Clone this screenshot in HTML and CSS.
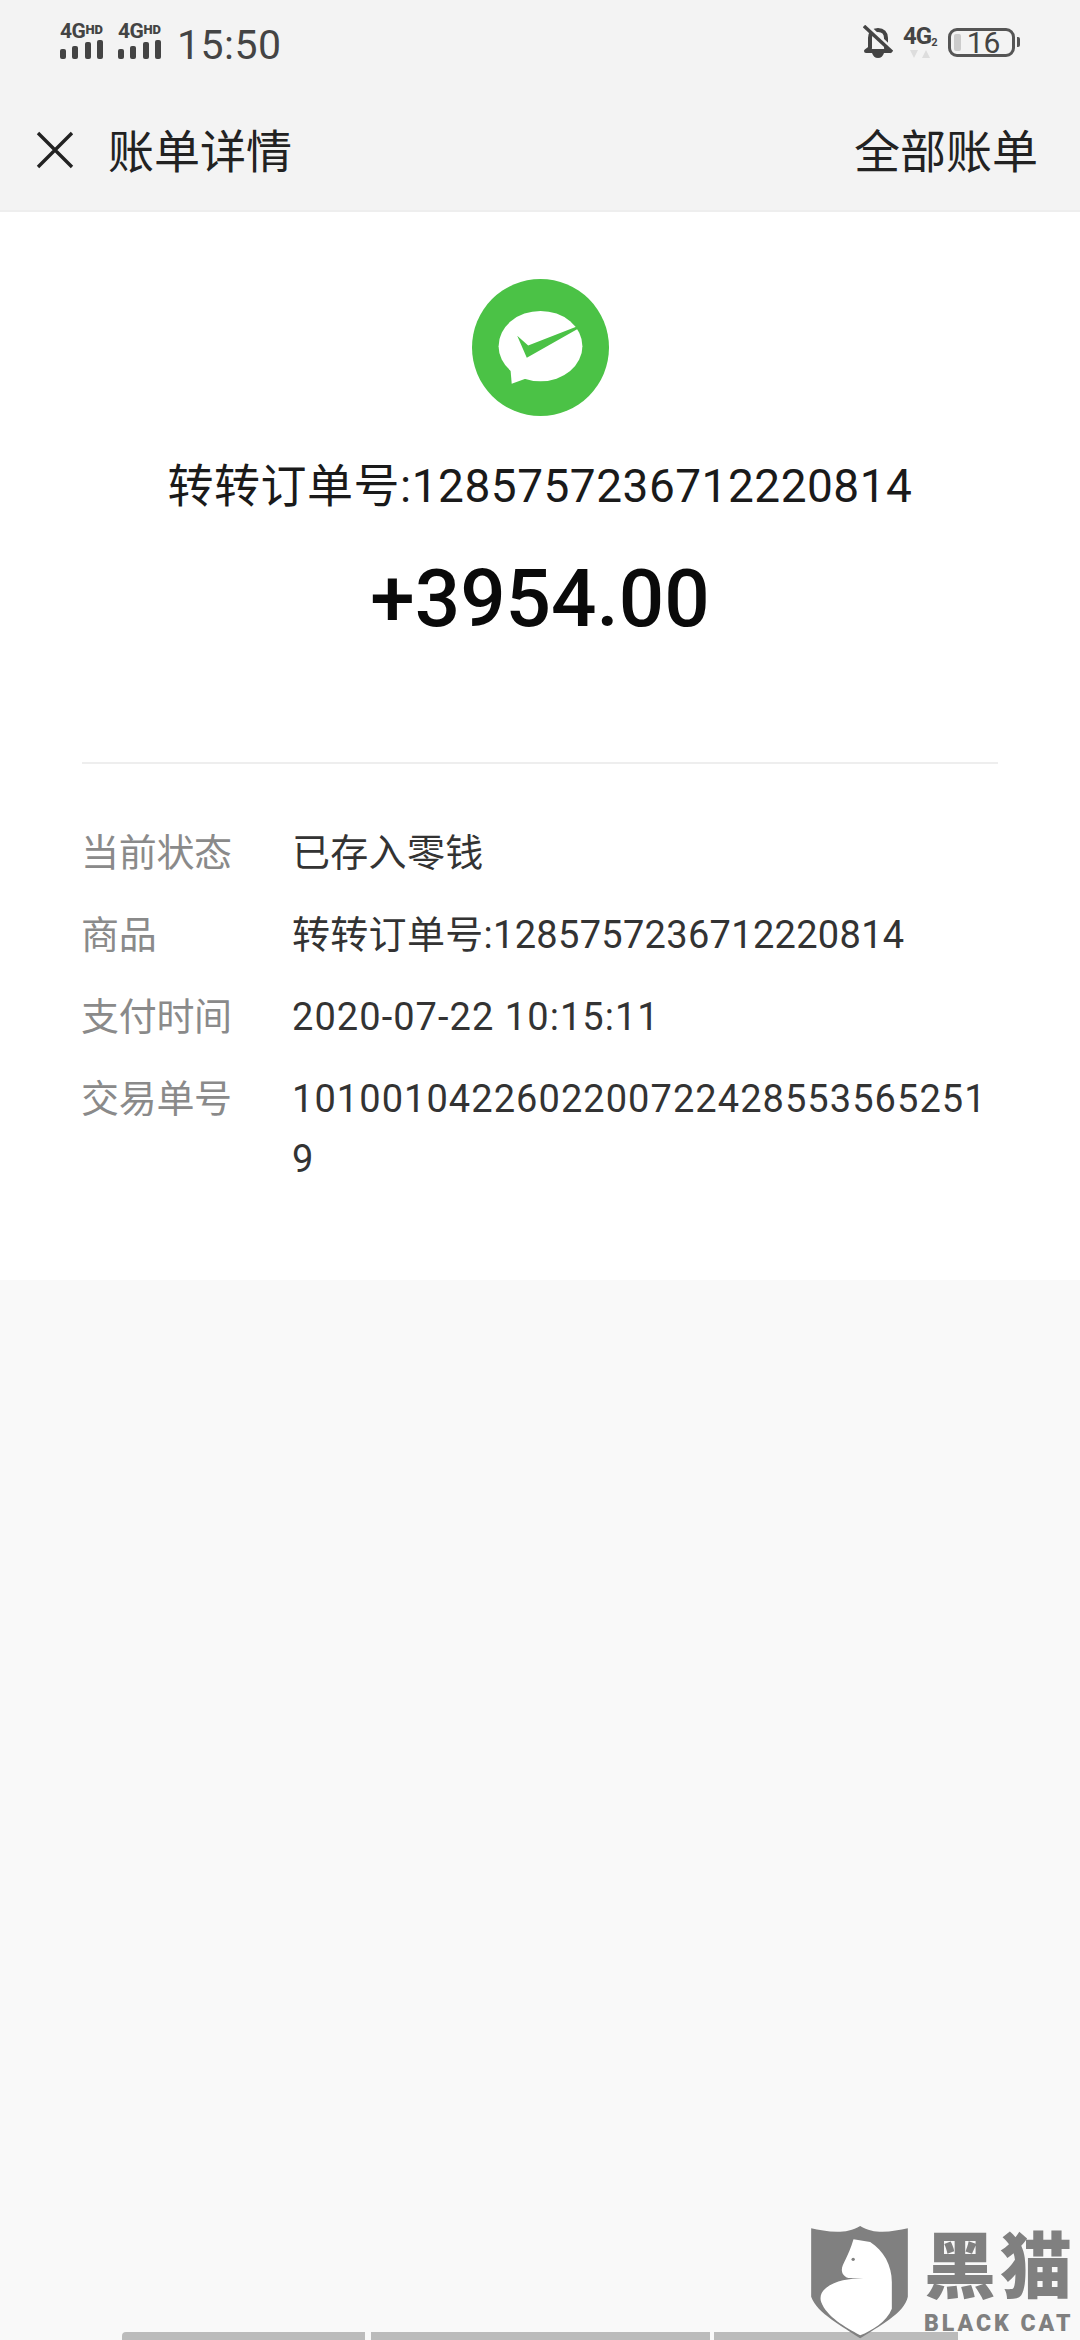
FILE: index.html
```html
<!DOCTYPE html>
<html lang="zh-CN">
<head>
<meta charset="utf-8" />
<title>账单详情</title>
<link rel="stylesheet" href="styles.css">
</head>
<body>
<div class="page">
  <div class="head">
    <div class="status">
      <div class="sig">
        <div class="sig-txt">4G<span>HD</span></div>
        <div class="bars"><i class="b1"></i><i class="b2"></i><i class="b3"></i><i class="b4"></i></div>
      </div>
      <div class="sig">
        <div class="sig-txt">4G<span>HD</span></div>
        <div class="bars"><i class="b1"></i><i class="b2"></i><i class="b3"></i><i class="b4"></i></div>
      </div>
      <div class="time">15:50</div>
      <div class="status-right">
        <svg class="bell" viewBox="0 0 30 33" width="30" height="33">
          <path d="M7 23V13c0-5 3-8 8-8s8 3 8 8v10l4 3H3z" fill="none" stroke="#444" stroke-width="4" stroke-linejoin="round"/>
          <path d="M9 28c1 3 3 5 6 5s5-2 6-5z" fill="#444"/>
          <path d="M3 0l27 26" stroke="#f3f3f3" stroke-width="5"/>
          <path d="M1 1l28 26" stroke="#444" stroke-width="3.400"/>
        </svg>
        <div class="net">
          <div class="net-txt">4G<sub>2</sub></div>
          <div class="net-arrows"><i class="down"></i><i class="up"></i></div>
        </div>
        <div class="batt"><i class="level"></i><span>16</span></div>
        <i class="batt-cap"></i>
      </div>
    </div>
    <div class="nav">
      <svg class="close" viewBox="0 0 38 38" width="38" height="38">
        <path d="M2 2l34 34M36 2L2 36" stroke="#222" stroke-width="3.4" fill="none"/>
      </svg>
      <div class="nav-title">账单详情</div>
      <div class="nav-link">全部账单</div>
    </div>
  </div>

  <div class="card">
    <div class="top">
      <svg class="logo" viewBox="0 0 100 100" width="137" height="137">
        <circle cx="50" cy="50" r="50" fill="#4bc246"/>
        <ellipse cx="50" cy="49" rx="30.6" ry="25.7" fill="#fff"/>
        <path d="M28 65l1 11.500 11-4z" fill="#fff"/>
        <path d="M33 41.500l7 16L78 36l-1-1.500-36 14z" fill="#4bc246"/>
      </svg>
      <div class="order">转转订单号:1285757236712220814</div>
      <div class="amount">+3954.00</div>
    </div>
    <div class="line"></div>
    <div class="rows">
      <div class="row"><div class="lab">当前状态</div><div class="val">已存入零钱</div></div>
      <div class="row"><div class="lab">商品</div><div class="val">转转订单号:1285757236712220814</div></div>
      <div class="row"><div class="lab">支付时间</div><div class="val wide">2020-07-22 10:15:11</div></div>
      <div class="row"><div class="lab">交易单号</div><div class="val wide">10100104226022007224285535652519</div></div>
    </div>
  </div>

  <div class="rest"></div>
  <div class="tabs"><i class="t1"></i><i class="t2"></i><i class="t3"></i></div>

  <div class="mark">
    <svg class="shield" viewBox="150 75 296 345" width="99" height="115">
      <path d="M153 85c40 8 100 22 147-7 47 29 100 15 143 7v205c-10 50-90 90-143 125-50-35-130-75-147-125z" fill="#808080"/>
      <path d="M280 118l50 8c40 25 65 70 65 120v80c-15 40-60 65-95 80-45-25-100-55-117-100-5-15 0-30 12-40 30-25 70-30 115-31l-45-1c-15-5-20-15-20-25 0-15 20-40 35-91z" fill="#fff"/>
      <circle cx="279" cy="178" r="5" fill="#808080"/>
    </svg>
    <div class="mark-txt">
      <div class="mark-cn">黑猫</div>
      <div class="mark-en">BLACK CAT</div>
    </div>
  </div>
</div>
</body>
</html>
```

FILE: styles.css
```css
*{box-sizing:border-box;}
html,body{margin:0;padding:0;}
body{font-family:"Roboto","Noto Sans CJK SC",sans-serif;background:#f9f9f9;color:#111;}
.page{width:1080px;height:2340px;display:flex;flex-direction:column;position:relative;overflow:hidden;}

.head{height:212px;background:#f3f3f3;border-bottom:2px solid #eee;flex:none;}
.status{height:88px;padding:21px 60px 0;display:flex;align-items:flex-start;color:#444;}
.sig{width:45px;margin-right:13px;}
.sig-txt{font:700 21px/17px "Roboto",sans-serif;white-space:nowrap;letter-spacing:-.5px;}
.sig-txt span{font-size:13px;font-weight:900;vertical-align:4px;letter-spacing:0;}
.bars{display:flex;justify-content:space-between;align-items:flex-end;height:19px;width:43px;}
.bars i{display:block;width:6px;background:#444;border-radius:2px;}
.bars .b1{height:10px;}
.bars .b2{height:13px;}
.bars .b3{height:17px;}
.bars .b4{height:19px;}
.time{font:400 41px/40px "Roboto",sans-serif;margin:4px 0 0 1px;letter-spacing:.5px;}
.status-right{margin-left:auto;display:flex;align-items:flex-start;}
.bell{display:block;margin:4px 10px 0 0;}
.net{width:45px;}
.net-txt{font:700 24px/20px "Roboto",sans-serif;margin-top:5px;letter-spacing:-1px;}
.net-txt sub{font-size:11px;line-height:0;vertical-align:-2px;}
.net-arrows{display:flex;gap:4px;margin:4px 0 0 7px;}
.net-arrows i{display:block;width:0;height:0;border-left:4px solid transparent;border-right:4px solid transparent;}
.net-arrows .down{border-top:8px solid #ddd;}
.net-arrows .up{border-bottom:8px solid #ddd;}
.batt{width:67px;height:29px;border:3px solid #555;border-radius:9px;margin-top:7px;position:relative;display:flex;justify-content:center;align-items:center;font:400 30px/24px "Roboto",sans-serif;padding-left:4px;}
.batt .level{position:absolute;left:3px;top:3px;bottom:3px;width:7px;background:#ccc;border-radius:2px;}
.batt-cap{display:block;width:3px;height:10px;background:#555;margin:16px 0 0 2px;border-radius:0 2px 2px 0;}

.nav{height:122px;padding:5px 42px 0 36px;display:flex;align-items:center;font-size:46px;line-height:60px;color:#222;}
.close{display:block;flex:none;margin-top:-3px;}
.nav-title{margin-left:34px;}
.nav-link{margin-left:auto;}

.card{background:#fff;height:1068px;flex:none;padding-top:67px;}
.top{display:flex;flex-direction:column;align-items:center;}
.logo{display:block;}
.order{font-size:46px;line-height:60px;margin-top:40px;color:#1a1a1a;letter-spacing:.5px;}
.amount{font-size:80px;font-weight:500;line-height:90px;margin-top:38px;color:#0a0a0a;}
.line{height:2px;background:#eeeeee;margin:118px 82px 0;}
.rows{margin:59px 82px 0;display:flex;flex-direction:column;gap:22px;}
.row{display:flex;font-size:38px;line-height:60px;}
.lab{width:210px;flex:none;color:#8a8a8a;letter-spacing:-.3px;margin-left:-1px;margin-right:1px;}
.val{flex:1;color:#333;word-break:break-all;letter-spacing:.3px;}
.val.wide{letter-spacing:1.05px;}

.rest{flex:1;}
.tabs{height:8px;flex:none;display:flex;padding-left:122px;}
.tabs i{display:block;height:8px;background:#bbb;}
.tabs .t1{width:243px;border-radius:4px 0 0 0;margin-right:6px;}
.tabs .t2{width:339px;margin-right:4px;}
.tabs .t3{width:244px;}

.mark{position:absolute;left:810px;top:2225px;display:flex;color:#808080;}
.shield{display:block;flex:none;}
.mark-txt{margin-left:15px;}
.mark-cn{font:900 72px/70px "Roboto","Noto Sans CJK SC",sans-serif;margin-top:8px;white-space:nowrap;letter-spacing:4px;}
.mark-en{font:900 23px/24px "Roboto",sans-serif;margin-top:9px;letter-spacing:3px;white-space:nowrap;}
```
